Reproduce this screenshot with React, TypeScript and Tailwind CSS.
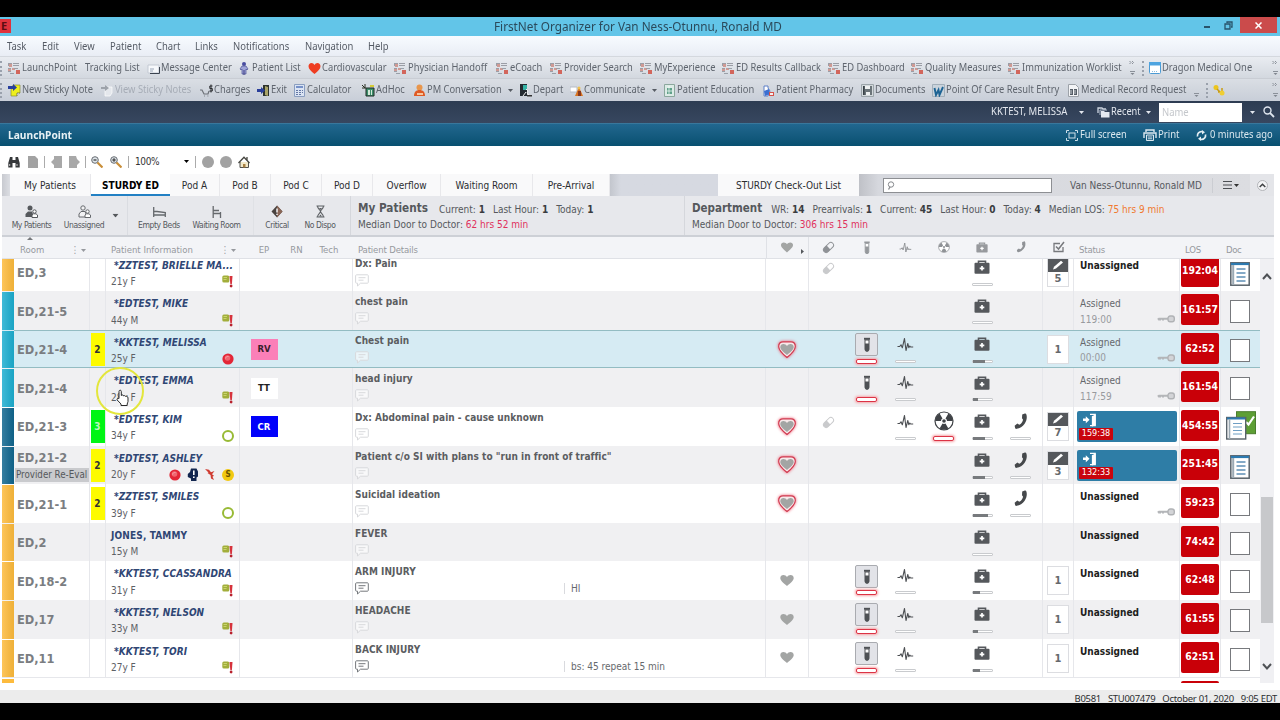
import React from 'react';

const COLS = "grid grid-cols-[12px_76px_16px_134px_48px_17px_48px_413px_43px_38px_39px_38px_39px_38px_42px_31px_106px_41px_39px]";

type Tool = { label: string; w: string; icon?: string; arrow?: boolean; muted?: boolean };

const menus = [
    { label: 'Task', w: 'w-[34.5px]' },
    { label: 'Edit', w: 'w-[32px]' },
    { label: 'View', w: 'w-[36px]' },
    { label: 'Patient', w: 'w-[46px]' },
    { label: 'Chart', w: 'w-[39px]' },
    { label: 'Links', w: 'w-[38px]' },
    { label: 'Notifications', w: 'w-[72px]' },
    { label: 'Navigation', w: 'w-[63px]' },
    { label: 'Help', w: 'w-[40px]' },
];

const toolsTop: Tool[] = [
    { label: 'LaunchPoint', w: 'w-[77px]', icon: 'grid' },
    { label: 'Tracking List', w: 'w-[62px]' },
    { label: 'Message Center', w: 'w-[91px]', icon: 'mail' },
    { label: 'Patient List', w: 'w-[70px]', icon: 'person' },
    { label: 'Cardiovascular', w: 'w-[86px]', icon: 'heart' },
    { label: 'Physician Handoff', w: 'w-[102px]', icon: 'grid' },
    { label: 'eCoach', w: 'w-[54px]', icon: 'grid' },
    { label: 'Provider Search', w: 'w-[90px]', icon: 'grid' },
    { label: 'MyExperience', w: 'w-[82px]', icon: 'grid' },
    { label: 'ED Results Callback', w: 'w-[106px]', icon: 'grid' },
    { label: 'ED Dashboard', w: 'w-[83px]', icon: 'grid' },
    { label: 'Quality Measures', w: 'w-[97px]', icon: 'grid' },
    { label: 'Immunization Worklist', w: 'w-[121px]', icon: 'grid' },
];

const toolsBottom: Tool[] = [
    { label: 'New Sticky Note', w: 'w-[93px]', icon: 'sticky' },
    { label: 'View Sticky Notes', w: 'w-[99px]', icon: 'stickyOff', muted: true },
    { label: 'Charges', w: 'w-[57px]', icon: 'charges' },
    { label: 'Exit', w: 'w-[36px]', icon: 'exit' },
    { label: 'Calculator', w: 'w-[69px]', icon: 'calc' },
    { label: 'AdHoc', w: 'w-[51px]', icon: 'adhoc' },
    { label: 'PM Conversation', w: 'w-[106px]', icon: 'pm', arrow: true },
    { label: 'Depart', w: 'w-[51px]', icon: 'depart' },
    { label: 'Communicate', w: 'w-[93px]', icon: 'comm', arrow: true },
    { label: 'Patient Education', w: 'w-[99px]', icon: 'edu' },
    { label: 'Patient Pharmacy', w: 'w-[99px]', icon: 'pharm' },
    { label: 'Documents', w: 'w-[71px]', icon: 'docs' },
    { label: 'Point Of Care Result Entry', w: 'w-[135px]', icon: 'poc' },
    { label: 'Medical Record Request', w: 'w-[125px]', icon: 'mrr' },
];

const ToolIcon = ({ name }: { name: string }) => {
    const p = { width: 13, height: 13, viewBox: '0 0 13 13', className: 'shrink-0' };
    switch (name) {
        case 'grid':
            return (
                <svg {...p}>
                    <path d="M0 1h4v3H0zM5 1h6v1H5zM5 3h6v1H5zM0 6h3v4H0z" fill="#9b9ea6" />
                    <path d="M1 2h3v3H1zM4 6h3v2H4zM0 7h3v2H0z" fill="#cf9a94" />
                    <path d="M6 6h4v1H6zM2 11h4v1H2z" fill="#9aa0a8" />
                    <path d="M8 8h4v4H8z" fill="#d2665c" />
                </svg>
            );
        case 'mail':
            return (
                <svg {...p}>
                    <path d="M1 3h11v8H1z" fill="#f6f8fb" stroke="#c3c9d3" />
                    <path d="M3 11.500h9.500V5" stroke="#3c4450" fill="none" />
                    <path d="M3 7h4M3 9h3" stroke="#9aa6b8" />
                </svg>
            );
        case 'person':
            return (
                <svg {...p}>
                    <circle cx="6" cy="2" r="2" fill="#484ca0" />
                    <path d="M4 4h4l2 3-1 1-1-1v5H4V7L3 8 2 7z" fill="#9fa4d8" stroke="#4c5196" strokeWidth=".7" />
                    <path d="M6 8v5" stroke="#3c3f80" />
                </svg>
            );
        case 'heart':
            return (
                <svg {...p}>
                    <path d="M6.500 12C3 9 .5 7 .5 4.200C.5 2.400 1.800 1 3.500 1c1.300 0 2.400.8 3 2 .6-1.200 1.700-2 3-2 1.700 0 3 1.400 3 3.200C12.500 7 10 9 6.500 12z" fill="#ee3d22" />
                </svg>
            );
        case 'sticky':
            return (
                <svg {...p}>
                    <path d="M5 1h7v8l-3 3H3V6z" fill="#eef01c" stroke="#8b8c36" strokeWidth=".7" />
                    <path d="M0 2h5V0l4 3.500L5 7V5H0z" fill="#273f9d" />
                    <path d="M9 12V9h3" fill="#fff" stroke="#4a4a4a" strokeWidth=".7" />
                </svg>
            );
        case 'stickyOff':
            return (
                <svg {...p}>
                    <path d="M6 3h5v6l-2 3H4V7z" fill="#e4e7ec" stroke="#fff" strokeWidth=".7" />
                    <path d="M0 3h4V1l4 3-4 3V5H0z" fill="#9da2aa" />
                </svg>
            );
        case 'charges':
            return (
                <svg {...p}>
                    <path d="M0 6h2l2 4h4l1-3M4 12h.8M7.500 12h.8" stroke="#6d7178" fill="none" strokeWidth="1.200" />
                    <path d="M12.500 2H9.800v2.500h2.500V7H9.500M11 .5v8" stroke="#2a2c30" fill="none" />
                </svg>
            );
        case 'exit':
            return (
                <svg {...p}>
                    <path d="M6 1h6v11H6z" fill="#2d322c" />
                    <path d="M8 2l3 1v9l-3-1z" fill="#a9a468" />
                    <path d="M0 5h4V3l4 3.500L4 10V8H0z" fill="#2a3f9b" />
                </svg>
            );
        case 'calc':
            return (
                <svg {...p}>
                    <path d="M1.500.5h10v12h-10z" fill="#dbe4f3" stroke="#8a9ec0" />
                    <path d="M3 2h7v2H3z" fill="#7691c8" />
                    <path d="M3 6h2v1H3zM6 6h2v1H6zM9 6h1v1H9zM3 8h2v1H3zM6 8h2v1H6zM9 8h1v1H9zM3 10h2v1H3zM6 10h2v1H6z" fill="#6478a5" />
                </svg>
            );
        case 'adhoc':
            return (
                <svg {...p}>
                    <path d="M4 4h8v8H4z" fill="#3d8f6c" stroke="#1f2a24" />
                    <path d="M6 6h2v5H6zM9 6h1v5H9z" fill="#d4e8d8" />
                    <path d="M0 1l3 3M3 0v4M0 4h4" stroke="#292f20" />
                    <path d="M8 1h4v2H8z" fill="#d4cb35" />
                </svg>
            );
        case 'pm':
            return (
                <svg {...p}>
                    <circle cx="6.500" cy="3.500" r="3" fill="#e8964c" />
                    <path d="M1 12c0-4 2-6 5.500-6S12 8 12 12z" fill="#e05a24" />
                    <path d="M4 9h6v2H4z" fill="#f8c59c" />
                </svg>
            );
        case 'depart':
            return (
                <svg {...p}>
                    <path d="M1 0h7v12H1z" fill="#232a30" />
                    <path d="M4 1h4v5H4z" fill="#35b3a5" />
                    <path d="M7 5l2 2-1 2 3 3M7 8l-3 4" stroke="#f0f0f0" fill="none" />
                    <path d="M8 11h5v1.500H8z" fill="#333" />
                </svg>
            );
        case 'comm':
            return (
                <svg {...p}>
                    <path d="M0 3h7v5H0z" fill="#fff" stroke="#b7bcc6" />
                    <path d="M9 3l4 9H5z" fill="#d8731f" />
                    <path d="M8 7h3v5H8z" fill="#8b3a1c" />
                    <circle cx="9" cy="4" r="1.500" fill="#efc04c" />
                </svg>
            );
        case 'edu':
            return (
                <svg {...p}>
                    <path d="M1.500.5h10v12h-10z" fill="#dcebe6" stroke="#8ba79d" />
                    <path d="M4 4h5v6H4z" fill="#5fa18a" />
                    <path d="M6 2v8M4 7h5" stroke="#fff" strokeWidth=".7" />
                </svg>
            );
        case 'pharm':
            return (
                <svg {...p}>
                    <path d="M2 2h4v2l2 3-2 5H2z" fill="#fff" stroke="#5d7fc6" />
                    <path d="M2 7l5-2 1 5-5 2z" fill="#3c6fd0" />
                    <path d="M7 8h5v4H7z" fill="#d8524a" />
                    <path d="M8 9h3v2H8z" fill="#f1f1f1" />
                </svg>
            );
        case 'docs':
            return (
                <svg {...p}>
                    <path d="M.5.5h12v12H.5z" fill="#d3d9dc" stroke="#9ca5aa" />
                    <path d="M2 2h9v9H2z" fill="#6b7479" />
                    <path d="M4 2h5v3H4zM5 8h4v3H5z" fill="#eef1f1" />
                    <path d="M2 2h1.500v9H2z" fill="#394147" />
                </svg>
            );
        case 'poc':
            return (
                <svg {...p}>
                    <path d="M.5.5h12v12H.5z" fill="#c9d3dc" stroke="#a3afba" />
                    <path d="M2.500 4l1.500 7 2.500-5 1 5 3.500-8" stroke="#1d6394" fill="none" strokeWidth="1.900" />
                </svg>
            );
        default:
            return (
                <svg {...p}>
                    <path d="M1.500.5h7l3 3v9h-10z" fill="#f3f4f6" stroke="#9da2a9" />
                    <path d="M3 5h3v6H3zM7 5h3v6H7z" fill="#565d66" />
                    <path d="M4 6v4M8 6v4" stroke="#e9edf0" strokeWidth=".8" />
                </svg>
            );
    }
};

const Grip = ({ className = '' }: { className?: string }) => (
    <div className={`h-[15px] w-0.5 shrink-0 border-l-2 border-dotted border-[#9aa1ac] ${className}`} />
);

const More = ({ className = '', low }: { className?: string; low?: boolean }) => (
    <svg width="6" height="16" viewBox="0 0 6 16" className={`shrink-0 ${className}`}>
        {!low && <path d="M.5 1l1.500 1.500L.5 4M3 1l1.500 1.500L3 4" stroke="#8a9099" fill="none" />}
        <path d="M1 11.500h5" stroke="#8a9099" />
        <path d="M1.500 13h4l-2 2z" fill="#80868f" />
    </svg>
);

const Caret = ({ className = '' }: { className?: string }) => (
    <svg width="5" height="3" viewBox="0 0 5 3" className={`shrink-0 ${className}`}><path d="M0 0h5L2.500 3z" fill="currentColor" /></svg>
);

const ToolItem = ({ tool }: { tool: Tool }) => (
    <div className={`flex shrink-0 items-center whitespace-nowrap ${tool.w} ${tool.muted ? 'text-[#a6acb6]' : 'text-[#5f656e]'}`}>
        {tool.icon && <div className="mr-px"><ToolIcon name={tool.icon} /></div>}
        <span className="flex-1 w-0 origin-left scale-x-[0.89]">{tool.label}</span>
        {tool.arrow && <Caret className="mr-[6px] text-[#565b63]" />}
    </div>
);

const tabs = [
    { label: 'My Patients', w: 'w-[81px]' },
    { label: 'STURDY ED', w: 'w-[79px]' },
    { label: 'Pod A', w: 'w-[50px]' },
    { label: 'Pod B', w: 'w-[51px]' },
    { label: 'Pod C', w: 'w-[51px]' },
    { label: 'Pod D', w: 'w-[51px]' },
    { label: 'Overflow', w: 'w-[68px]' },
    { label: 'Waiting Room', w: 'w-[92px]' },
    { label: 'Pre-Arrival', w: 'w-[77px]' },
];

type Row = {
    strip: string;
    room: string;
    sub?: string;
    acuity?: number;
    name: string;
    age: string;
    flag: 'alert' | 'red' | 'ring' | 'many';
    ep?: string;
    epClass?: string;
    details: string;
    note?: string;
    comment?: boolean;
    heart?: 'glow' | 'plain';
    pill?: boolean;
    tube?: 'button' | 'plain';
    ekg?: boolean;
    rad?: boolean;
    kit: string;
    phone?: boolean;
    task?: number;
    pen?: boolean;
    status: string;
    time?: string;
    key?: boolean;
    los: string;
    doc?: 'note' | 'done';
};

const ORANGE = 'bg-[#fdbb3d]';
const CYAN = 'bg-[#1eaed0]';
const TEAL = 'bg-[#12678f]';

const rows: Row[] = [
    { strip: ORANGE, room: 'ED,3', name: '*ZZTEST, BRIELLE MA...', age: '21y F', flag: 'alert', details: 'Dx: Pain', pill: true, kit: 'w-0', task: 5, pen: true, status: 'Unassigned', los: '192:04', doc: 'note' },
    { strip: CYAN, room: 'ED,21-5', name: '*EDTEST, MIKE', age: '44y M', flag: 'alert', details: 'chest pain', kit: 'w-0', status: 'Assigned', time: '119:00', key: true, los: '161:57' },
    { strip: CYAN, room: 'ED,21-4', acuity: 2, name: '*KKTEST, MELISSA', age: '25y F', flag: 'red', ep: 'RV', epClass: 'bg-[#fb7fb8] text-[#38202c]', details: 'Chest pain', heart: 'glow', tube: 'button', ekg: true, kit: 'w-[12px]', task: 1, status: 'Assigned', time: '00:00', key: true, los: '62:52' },
    { strip: CYAN, room: 'ED,21-4', name: '*EDTEST, EMMA', age: '28y F', flag: 'alert', ep: 'TT', epClass: 'bg-white text-[#222]', details: 'head injury', tube: 'plain', ekg: true, kit: 'w-[5px]', status: 'Assigned', time: '117:59', key: true, los: '161:54' },
    { strip: TEAL, room: 'ED,21-3', acuity: 3, name: '*EDTEST, KIM', age: '34y F', flag: 'ring', ep: 'CR', epClass: 'bg-[#0000fb] text-white', details: 'Dx: Abdominal pain - cause unknown', heart: 'glow', pill: true, ekg: true, rad: true, kit: 'w-[12px]', phone: true, task: 7, pen: true, status: 'Blue', time: '159:38', los: '454:55', doc: 'done' },
    { strip: TEAL, room: 'ED,21-2', sub: 'Provider Re-Eval', acuity: 2, name: '*EDTEST, ASHLEY', age: '20y F', flag: 'many', details: 'Patient c/o SI with plans to "run in front of traffic"', heart: 'glow', kit: 'w-[12px]', phone: true, task: 3, pen: true, status: 'Blue', time: '132:33', los: '251:45', doc: 'note' },
    { strip: ORANGE, room: 'ED,21-1', acuity: 2, name: '*ZZTEST, SMILES', age: '39y F', flag: 'ring', details: 'Suicidal ideation', heart: 'glow', kit: 'w-[15px]', phone: true, status: 'Unassigned', key: true, los: '59:23' },
    { strip: ORANGE, room: 'ED,2', name: 'JONES, TAMMY', age: '15y M', flag: 'alert', details: 'FEVER', kit: 'w-0', status: 'Unassigned', los: '74:42' },
    { strip: ORANGE, room: 'ED,18-2', name: '*KKTEST, CCASSANDRA', age: '31y F', flag: 'alert', details: 'ARM INJURY', comment: true, note: 'HI', heart: 'plain', tube: 'button', ekg: true, kit: 'w-[7px]', task: 1, status: 'Unassigned', los: '62:48' },
    { strip: ORANGE, room: 'ED,17', name: '*KKTEST, NELSON', age: '33y M', flag: 'alert', details: 'HEADACHE', heart: 'plain', tube: 'button', ekg: true, kit: 'w-[5px]', task: 1, status: 'Unassigned', los: '61:55' },
    { strip: ORANGE, room: 'ED,11', name: '*KKTEST, TORI', age: '27y F', flag: 'alert', details: 'BACK INJURY', comment: true, note: 'bs: 45 repeat 15 min', heart: 'plain', tube: 'button', ekg: true, kit: 'w-[7px]', task: 1, status: 'Unassigned', los: '62:51' },
];

const HeartIcon = ({ glow }: { glow?: boolean }) => (
    <svg width="26" height="24" viewBox="0 0 26 24" className={glow ? 'drop-shadow-[0_0_1.5px_#f0566a]' : ''}>
        {glow && <path d="M13 20.500C8.500 17 5 13.500 4.700 9.800C4.500 6.300 6.500 4.800 9 4.800h8c2.500 0 4.500 1.500 4.300 5C21 13.500 17.500 17 13 20.500z" fill="#f7e9ea" stroke="#cf3a50" strokeWidth="1.200" />}
        <path d="M13 18C9 14.500 6.300 12.400 6.300 9.900C6.300 8.100 7.700 6.900 9.400 6.900c1.500 0 2.900.8 3.600 2 .7-1.200 2.100-2 3.600-2 1.700 0 3.100 1.200 3.100 3C19.700 12.400 17 14.500 13 18z" fill="#a3a5a4" />
    </svg>
);

const PillIcon = ({ color }: { color: string }) => (
    <svg width="13" height="13" viewBox="0 0 13 13">
        <g transform="rotate(-45 6.500 6.500)">
            <rect x="0.500" y="3.800" width="12" height="5.400" rx="2.700" fill="none" stroke={color} />
            <path d="M6.500 3.800H3.200a2.700 2.700 0 0 0 0 5.400h3.300z" fill={color} />
        </g>
    </svg>
);

const TubeIcon = ({ color }: { color: string }) => (
    <svg width="8" height="15" viewBox="0 0 8 15">
        <path d="M1 .8h6v2H1z" fill={color} />
        <path d="M2 3h4v9.300a2 2 0 0 1-4 0z" fill="#fff" stroke={color} />
        <path d="M2 6.500h4v6a2 2 0 0 1-4 0z" fill={color} />
    </svg>
);

const EkgIcon = ({ color }: { color: string }) => (
    <svg width="17" height="15" viewBox="0 0 17 15">
        <path d="M.5 9.500h2.200l1.300-1.700 1.300 3L7.500 1.500 9 13.500l1.800-7 1 4.200 1-1.700.8 1h2.600" fill="none" stroke={color} strokeWidth="1.100" strokeLinejoin="round" />
    </svg>
);

const RadIcon = ({ color, size }: { color: string; size: number }) => (
    <svg width={size} height={size} viewBox="0 0 20 20">
        <circle cx="10" cy="10" r="9" fill="#fff" stroke={color} strokeWidth="1.200" />
        <circle cx="10" cy="10" r="1.800" fill={color} />
        <path d="M7 10H1.200A8.800 8.800 0 0 1 5.600 2.400L8.500 7.400A3 3 0 0 0 7 10z" fill={color} />
        <path d="M13 10h5.800a8.800 8.800 0 0 0-4.400-7.600l-2.900 5A3 3 0 0 1 13 10z" fill={color} />
        <path d="M8.500 12.600L5.600 17.600a8.800 8.800 0 0 0 8.800 0l-2.900-5a3 3 0 0 1-3 0z" fill={color} />
    </svg>
);

const KitIcon = ({ color, w, h }: { color: string; w: number; h: number }) => (
    <svg width={w} height={h} viewBox="0 0 16 14">
        <path d="M4.500 3V1.200h7V3" fill="none" stroke={color} strokeWidth="1.600" />
        <rect x="0.500" y="2.800" width="15" height="11" rx="1" fill={color} />
        <path d="M8 6v4.600M5.700 8.300h4.600" stroke="#fff" strokeWidth="1.700" />
    </svg>
);

const PhoneIcon = ({ color, size }: { color: string; size: number }) => (
    <svg width={size} height={size} viewBox="0 0 16 18">
        <path d="M9.800 1.500l2.800-.9c.9-.2 1.400.3 1.700 1.200.8 3 .3 6.400-1.900 9.500-2.200 3-5.200 5-8.400 5.500-.9.100-1.500-.2-1.700-1l-.5-2.200 2.900-2.400 2 1.300c2-1.200 3.600-3 4-5.400L9.600 5.600z" fill={color} />
    </svg>
);

const KeyIcon = () => (
    <svg width="18" height="8" viewBox="0 0 18 8">
        <path d="M11 3.800H2L.8 4.600M3 4.500v1M6 4.500v1" stroke="#b4b6b9" strokeWidth="2" fill="none" />
        <rect x="11" y="1" width="6.300" height="5.800" rx="2.200" fill="#d3d4d7" stroke="#b0b2b5" strokeWidth="1.400" />
    </svg>
);

const Bubble = ({ on }: { on?: boolean }) => (
    <svg width="14" height="13" viewBox="0 0 14 13" className={on ? 'text-[#74787c]' : 'text-[#d8d9dc]'}>
        <path d="M1.500 .8h11a1 1 0 0 1 .8 1v6.400a1 1 0 0 1-.8 1H5.500L2.500 12V9.200h-1a1 1 0 0 1-.9-1V1.800a1 1 0 0 1 .9-1z" fill="#fff" fillOpacity=".5" stroke="currentColor" />
        <path d="M3.500 3.700h7M3.500 6.200h5" stroke="currentColor" />
    </svg>
);

const AlertFlag = () => (
    <svg width="12" height="13" viewBox="0 0 12 13">
        <rect x="0.300" y="0.500" width="7" height="7" rx="1.500" fill="#a2ae3b" />
        <path d="M1.500 2.500h3.500M1.500 4.500h3" stroke="#c9d46e" />
        <path d="M7.500 1h3l-.6 8H8.300z" fill="#d6323c" />
        <circle cx="9.100" cy="11" r="1.400" fill="#b8222e" />
    </svg>
);

const RedFlag = () => (
    <svg width="12" height="12" viewBox="0 0 12 12">
        <circle cx="6" cy="6" r="5.600" fill="#e32636" />
        <circle cx="5.500" cy="5" r="2.800" fill="#f06670" />
        <path d="M3.500 5.500c.3-1.500 1.500-2.300 3-2" stroke="#f8a5aa" fill="none" />
    </svg>
);

const Flag = ({ kind }: { kind: Row['flag'] }) => {
    if (kind === 'alert') return <AlertFlag />;
    if (kind === 'red') return <RedFlag />;
    if (kind === 'ring') return <div className="size-[12px] rounded-full border-2 border-[#98ba35]" />;
    return (
        <div className="flex items-center gap-[6px]">
            <RedFlag />
            <svg width="12" height="13" viewBox="0 0 12 13">
                <path d="M4 .5h5.500l1.500 3v5l-1.500 1V13H4v-2.500L.8 9V6L3 4z" fill="#12264f" />
                <path d="M6.800 2.500v4.500M6.800 8.500V10" stroke="#fff" strokeWidth="1.600" />
            </svg>
            <svg width="11" height="13" viewBox="0 0 11 13">
                <path d="M0 1l4 .8 2 2.500L9.500 3 7 6.300l2 1.500-1.500 1L9 12l-3-1.500L5.500 7 2.500 5l1-.5z" fill="#cf3b31" />
            </svg>
            <div className="flex size-3 items-center justify-center rounded-full bg-[#f2c811] text-[8px] font-bold leading-none text-[#6b5200]">S</div>
        </div>
    );
};

const Bar = ({ hot, fill = 'w-0' }: { hot?: boolean; fill?: string }) =>
    hot ? (
        <div className="h-[5px] w-[21px] rounded-[2px] border border-[#dc3345] bg-white shadow-[0_0_2.5px_1px_#f6a4a8]" />
    ) : (
        <div className="h-[3px] w-[21px] rounded-[1px] border border-[#c9cbce] bg-white">
            <div className={`-mt-px h-[3px] bg-[#777a7d] ${fill}`} />
        </div>
    );

// icon on top with its progress bar underneath
const Order = ({ children, hot, fill }: { children: React.ReactNode; hot?: boolean; fill?: string }) => (
    <div className="flex flex-col items-center">
        <div className="flex h-[29px] items-center justify-center">{children}</div>
        <div className={hot ? '' : 'pt-px'}><Bar hot={hot} fill={fill} /></div>
    </div>
);

const DocIcon = ({ done }: { done?: boolean }) => {
    if (done) {
        return (
            <svg width="30" height="29" viewBox="0 0 30 29">
                <rect x="10.500" y="0.700" width="19" height="22" fill="#5e9f35" stroke="#4b7d2e" />
                <path d="M20 11l2.500 2.500L28 5.500" stroke="#fff" strokeWidth="2.200" fill="none" />
                <rect x="0.700" y="6.500" width="19" height="21.500" fill="#fff" stroke="#59636b" strokeWidth="1.400" />
                <path d="M1 7.500h18" stroke="#2d7ab0" strokeWidth="2" />
                <path d="M3.500 8v20" stroke="#9ba9b3" strokeWidth="1.600" />
                <path d="M7 12.500h9M7 16h9M7 19.500h9M7 23h9" stroke="#6f9fc4" strokeWidth="1.200" />
            </svg>
        );
    }
    return (
        <svg width="20" height="24" viewBox="0 0 20 24">
            <rect x="0.800" y="0.800" width="18.400" height="22.400" fill="#fff" stroke="#59636b" strokeWidth="1.500" />
            <path d="M1 2h18" stroke="#2d7ab0" strokeWidth="2.200" />
            <path d="M3.200 3v20" stroke="#9ba9b3" strokeWidth="2" />
            <path d="M6.500 7h9M6.500 11h9M6.500 15h9M6.500 19h9" stroke="#5d8fb5" strokeWidth="1.300" />
        </svg>
    );
};

const PatientRow = ({ row, index }: { row: Row; index: number }) => {
    const selected = index === 2;
    const bg = selected ? 'bg-[#d6ebf3]' : index % 2 ? 'bg-[#f0f0f2]' : 'bg-white';
    const line = selected ? 'border-r border-transparent' : 'border-r border-[#e6e7eb]';
    const italic = row.name.startsWith('*');
    return (
        <div className={`${COLS} relative h-[38.6px] ${bg}`}>
            {selected && <div className="absolute inset-y-0 right-0 left-3 border-y border-[#93bcc2]" />}
            <div className={`mt-px ${row.strip} bg-gradient-to-r from-white/15 to-black/5`} />
            <div className={`relative pl-[3px] ${line}`}>
                <div className={`text-[12.7px] leading-[16px] font-bold text-[#7a7d81] ${row.sub ? 'pt-[4px]' : 'pt-[12.5px]'}`}>{row.room}</div>
                {row.sub && <div className="-ml-[2px] mt-[2px] h-[14px] overflow-hidden bg-[#c9cacd] pl-px text-[9.7px] leading-[14px] whitespace-nowrap text-[#55585c]">{row.sub}</div>}
            </div>
            <div className={`relative flex justify-center ${line}`}>
                {row.acuity && (
                    <div className={`mt-[3px] flex h-[33px] w-[14px] items-center justify-center text-[10px] font-bold ${row.acuity === 3 ? 'bg-[#00f514] text-[#b9f5bd]' : 'bg-[#fdfb00] text-[#333]'}`}>{row.acuity}</div>
                )}
            </div>
            <div className={`relative pl-[5px] whitespace-nowrap ${line}`}>
                <div className={`pt-[6px] text-[10px] leading-[13px] font-bold text-[#2f4674] ${italic ? 'pl-[3px] tracking-[0.04px] italic' : 'tracking-[0.15px]'}`}>{row.name}</div>
                <div className="mt-[3px] flex h-[14px] items-center justify-between pr-[5px] text-[10px] text-[#5d6065]">
                    {row.age}
                    <Flag kind={row.flag} />
                </div>
            </div>
            <div className="relative flex items-center justify-center pt-px">
                {row.ep && <div className={`flex h-[21px] w-[27px] items-center justify-center text-[9.5px] font-bold ${row.epClass}`}>{row.ep}</div>}
            </div>
            <div />
            <div className={line} />
            <div className={`relative pl-[2px] whitespace-nowrap ${line}`}>
                <div className="pt-[4px] text-[10px] leading-[13px] font-bold tracking-[0.03px] text-[#5b5d61]">{row.details}</div>
                <div className="mt-[4px] flex h-[13px] items-center">
                    <Bubble on={row.comment} />
                    {row.note && <div className="ml-[195px] border-l border-[#d9dade] pl-[6px] text-[10px] leading-[11px] text-[#66696d]">{row.note}</div>}
                </div>
            </div>
            <div className={`relative flex items-center justify-center ${line}`}>{row.heart && <div className="pr-px pb-px"><HeartIcon glow={row.heart === 'glow'} /></div>}</div>
            <div className="relative flex justify-center pt-[9px]">{row.pill && <PillIcon color="#c9cacc" />}</div>
            <div className="relative">
                {row.tube && (
                    <Order hot>
                        {row.tube === 'button' ? (
                            <div className="mt-[1px] flex h-[23px] w-[23px] items-center justify-center rounded-[2px] border border-[#a9abb0] bg-[#e2e3e8]"><TubeIcon color="#4e5155" /></div>
                        ) : (
                            <TubeIcon color="#4e5155" />
                        )}
                    </Order>
                )}
            </div>
            <div className="relative">{row.ekg && <Order><EkgIcon color="#4c4f53" /></Order>}</div>
            <div className="relative">{row.rad && <Order hot><RadIcon color="#3f4246" size={20} /></Order>}</div>
            <div className="relative"><Order fill={row.kit}><KitIcon color="#55585c" w={16} h={14} /></Order></div>
            <div className={`relative pr-[2px] ${line}`}>{row.phone && <Order><PhoneIcon color="#45484b" size={17} /></Order>}</div>
            <div className={`relative flex justify-center pt-[5px] ${line}`}>
                {row.task && (
                    <div className="flex h-[29px] w-[22px] flex-col border border-[#dcdde1] bg-white text-[#66696d]">
                        {row.pen && (
                            <div className="flex h-[13px] shrink-0 items-center justify-center bg-[#55585c]">
                                <svg width="12" height="10" viewBox="0 0 12 10"><path d="M1 9.500l1-2.800L9 .8 11 2.500 4 8.500z" fill="#fff" /></svg>
                            </div>
                        )}
                        <div className="flex flex-1 items-center justify-center text-[11px] leading-none font-bold">{row.task}</div>
                    </div>
                )}
            </div>
            <div className={`relative ${line}`}>
                {row.status === 'Blue' ? (
                    <div className="mt-[4px] ml-[3px] h-[31px] w-[100px] rounded-[2px] bg-[#2e7da6] pt-[2px] pl-[2px]">
                        <svg width="14" height="14" viewBox="0 0 15 15" className="ml-1">
                            <path d="M0 6h3V3.500L7 7.200 3 11V8.500H0z" fill="#fff" />
                            <path d="M7.500 1.500H13v12H7.500" fill="none" stroke="#fff" strokeWidth="1.500" />
                            <path d="M9.500 3.500l4-2v12l-4 1z" fill="#fff" />
                        </svg>
                        <div className="mt-px flex h-[12px] w-[34px] items-center justify-center rounded-[1px] bg-[#c9050d] text-[9px] text-white">{row.time}</div>
                    </div>
                ) : (
                    <div className="pl-[6px] whitespace-nowrap">
                        <div className={`pt-[6px] text-[10px] leading-[13px] ${row.status === 'Unassigned' ? 'font-bold text-[#1d1e20]' : 'text-[#65686c]'}`}>{row.status}</div>
                        <div className="mt-[2px] flex h-[14px] items-center justify-between pr-[4px] text-[10px] text-[#989a9e]">
                            <span>{row.time}</span>
                            {row.key && <KeyIcon />}
                        </div>
                    </div>
                )}
            </div>
            <div className={`relative pt-[3px] pl-px ${line}`}>
                <div className="flex h-[31px] w-[38px] items-center justify-center rounded-[2px] bg-[#c90008] text-[10.3px] font-bold text-white">{row.los}</div>
            </div>
            <div className="relative flex justify-center pt-[9px] pr-px">
                {row.doc === 'done' ? <div className="-mt-[5px] ml-px"><DocIcon done /></div> : row.doc ? <DocIcon /> : <div className="h-[23px] w-[20px] border-[1.5px] border-[#77797d] bg-white" />}
            </div>
        </div>
    );
};

const Stat = ({ label, value }: { label: string; value: string }) => (
    <span>{label}: <b className="text-[#3a3c40]">{value}</b></span>
);

const App: React.FC = () => {
    return (
        <div className="relative flex h-[720px] w-[1280px] flex-col overflow-hidden bg-white pt-[17px] font-['Noto_Sans',sans-serif]">
            <div className="absolute inset-x-0 top-0 h-[17px] bg-black" />

            <div className="relative flex h-[19px] shrink-0 items-center justify-center bg-[#62c5e8] text-[12px] text-[#2b4a5b]">
                <div className="absolute top-[2px] left-0 flex h-[14px] w-[11px] items-center bg-[#e0323c] pl-[1px] text-[11px] font-bold text-[#5c0c12]">E</div>
                <span className="scale-x-[0.98] pr-[5px]">FirstNet Organizer for Van Ness-Otunnu, Ronald MD</span>
                <div className="absolute top-0 right-[3px] flex h-[16px] items-center">
                    <div className="mt-[4px] h-[2px] w-[6px] bg-[#28536a]" />
                    <svg width="9" height="9" viewBox="0 0 9 9" className="ml-[14px]"><path d="M1 3h5v5H1zM3 2V1h5v5H7" fill="none" stroke="#28536a" strokeWidth="1.300" /></svg>
                    <div className="ml-[7px] flex h-[16px] w-[37px] items-center justify-center bg-[#cb4b4b]">
                        <svg width="7" height="7" viewBox="0 0 7 7"><path d="M.5.5l6 6M6.500.5l-6 6" stroke="#fff" strokeWidth="1.500" /></svg>
                    </div>
                </div>
            </div>

            <div className="flex h-[21px] shrink-0 items-center border-b border-[#d4d8de] bg-gradient-to-b from-[#f7fbff] to-[#e9edf5] pt-[2px] text-[10.5px] text-[#555b65]">
                {menus.map(m => (
                    <span key={m.label} className={`pl-[7px] ${m.w}`}><span className="inline-block origin-left scale-x-[0.9]">{m.label}</span></span>
                ))}
            </div>

            <div className="flex h-[22px] shrink-0 items-center border-b border-[#c9cdd4] bg-gradient-to-b from-[#e9ecf1] to-[#d3d8df] pt-px text-[10.5px]">
                <Grip className="mr-[6px]" />
                {toolsTop.map(t => <ToolItem key={t.label} tool={t} />)}
                <More />
                <Grip className="mr-[5px] ml-[7px]" />
                <svg width="12" height="12" viewBox="0 0 12 12" className="shrink-0">
                    <rect x="0.500" y="0.500" width="11" height="11" rx="1" fill="#fff" stroke="#4c9bd4" />
                    <path d="M0 0h12v3.500H0z" fill="#4ea4e0" />
                    <path d="M3 9.500h6" stroke="#8cbde0" strokeDasharray="1" />
                </svg>
                <span className="ml-[1px] w-[110px] origin-left scale-x-[0.89] whitespace-nowrap text-[#5f656e]">Dragon Medical One</span>
                <More />
            </div>

            <div className="flex h-[22px] shrink-0 items-center bg-gradient-to-b from-[#dadee4] to-[#c8ced8] text-[10.5px]">
                <Grip className="mr-[6px]" />
                {toolsBottom.map(t => <ToolItem key={t.label} tool={t} />)}
                <More className="ml-px" low />
                <Grip className="mr-[5px] ml-[7px]" />
                <svg width="12" height="12" viewBox="0 0 12 12" className="shrink-0">
                    <circle cx="3" cy="3.500" r="2.500" fill="#ecc51f" /><path d="M4 5l3 3M9 4v4H5" stroke="#c99c15" strokeWidth="1.500" fill="none" />
                    <circle cx="9" cy="9" r="2.500" fill="#f0ce33" />
                </svg>
                <More className="ml-[47px]" />
            </div>

            <div className="flex h-[22px] shrink-0 items-center bg-gradient-to-b from-[#2d3c52] to-[#37475f] text-[10.5px] text-[#e3e7ee]">
                <span className="ml-[991px] w-[88px] origin-left scale-x-[0.91] whitespace-nowrap">KKTEST, MELISSA</span>
                <Caret />
                <svg width="13" height="12" viewBox="0 0 13 12" className="ml-[13px] shrink-0">
                    <path d="M1 7V2h4l1 1h3" fill="none" stroke="#cdd5e0" strokeWidth="1.300" />
                    <path d="M4 5h3l1 1h4.500v5.500H4z" fill="#e3e9f1" />
                    <path d="M3 9V4h7" fill="none" stroke="#aebacb" />
                </svg>
                <span className="ml-px w-[35px] shrink-0 origin-left scale-x-[0.88]">Recent</span>
                <Caret />
                <div className="mt-px ml-[8px] flex h-[19px] w-[83px] shrink-0 items-center bg-white pl-[3px] text-[#c4c7cb]"><span className="origin-left scale-x-[0.9]">Name</span></div>
                <Caret className="ml-[8px]" />
                <svg width="12" height="12" viewBox="0 0 12 12" className="ml-[8px]"><circle cx="4.500" cy="4.500" r="3.500" fill="none" stroke="#dfe5ee" strokeWidth="1.400" /><path d="M7 7l4 4" stroke="#dfe5ee" strokeWidth="1.800" /></svg>
            </div>

            <div className="flex h-[23px] shrink-0 items-center border-t border-[#39779b] bg-gradient-to-b from-[#21678f] to-[#075070] text-[10.5px] whitespace-nowrap text-[#dbe8ef]">
                <span className="w-[1069px] pl-2"><span className="inline-block origin-left scale-x-[0.93] text-[11px] font-bold text-[#e8f1f5]">LaunchPoint</span></span>
                <svg width="12" height="11" viewBox="0 0 12 11" className="shrink-0"><path d="M.5 3V.5H3M9 .5h2.500V3M11.500 8v2.500H9M3 10.500H.5V8" fill="none" stroke="#cfe0ea" /><rect x="3" y="3" width="6" height="5" fill="none" stroke="#cfe0ea" /></svg>
                <span className="ml-[2px] w-[63px] shrink-0 origin-left scale-x-[0.89]">Full screen</span>
                <svg width="14" height="12" viewBox="0 0 14 12" className="shrink-0"><path d="M3 3V1h8v2M1 9V4h12v5" fill="none" stroke="#dce8f0" strokeWidth="1.400" /><path d="M3.500 6h7v5.500h-7z" fill="#2c6989" stroke="#dce8f0" /><path d="M5 8h4M5 9.700h4" stroke="#dce8f0" strokeWidth=".8" /></svg>
                <span className="ml-[1px] w-[38px] shrink-0 origin-left scale-x-[0.91]">Print</span>
                <svg width="11" height="11" viewBox="0 0 11 11" className="shrink-0"><path d="M1.500 6.500A4 4 0 0 1 6 1.700M9.500 4.500A4 4 0 0 1 5 9.300" fill="none" stroke="#e3edf3" strokeWidth="1.700" /><path d="M6 0l3 2.200L6 4.500zM5 6.500L2 8.800 5 11z" fill="#e3edf3" /></svg>
                <span className="ml-[3px] origin-left scale-x-[0.89]">0 minutes ago</span>
            </div>

            <div className="relative flex min-h-0 flex-1 flex-col font-['DejaVu_Sans_Condensed','DejaVu_Sans',sans-serif] [font-stretch:condensed]">
                <div className="flex h-[28px] shrink-0 items-center pt-[3px] pl-[8px]">
                    <svg width="12" height="12" viewBox="0 0 12 12"><path d="M2 1h2.500v3h3V1H10l1.700 6v4.500H7.500V7h-3v4.500H.3V7z" fill="#36383b" /><path d="M1.700 8v2M9 8v2" stroke="#c6c6c6" /></svg>
                    <svg width="10" height="12" viewBox="0 0 10 12" className="ml-[8px]"><path d="M0 0h7l3 3v9H0z" fill="#a2a2a2" /></svg>
                    <div className="mx-[6px] h-[12px] w-px bg-[#ababab]" />
                    <svg width="11" height="12" viewBox="0 0 11 12"><path d="M3 0h8v12H3V9L0 6l3-3z" fill="#a8a8a8" /></svg>
                    <svg width="11" height="12" viewBox="0 0 11 12" className="ml-[7px]"><path d="M0 0h7l1 3 3 3-3 3v3H0z" fill="#a8a8a8" /></svg>
                    <div className="mx-[5px] h-[12px] w-px bg-[#ababab]" />
                    <svg width="12" height="12" viewBox="0 0 12 12"><circle cx="4" cy="4" r="3.300" fill="#dfe5ea" stroke="#676c72" /><path d="M2.500 4h3" stroke="#333" strokeWidth="1.200" /><path d="M6.500 6.500l5 5" stroke="#c98e38" strokeWidth="2.200" /></svg>
                    <svg width="12" height="12" viewBox="0 0 12 12" className="ml-[7px]"><circle cx="4" cy="4" r="3.300" fill="#dfe5ea" stroke="#676c72" /><path d="M2.200 4h3.600M4 2.200v3.600" stroke="#333" strokeWidth="1.200" /><path d="M6.500 6.500l5 5" stroke="#c98e38" strokeWidth="2.200" /></svg>
                    <span className="ml-[6px] w-[56px] border-l border-[#ababab] pl-[6px] text-[10px] leading-[12px] tracking-[-0.4px] text-[#333]">100%</span>
                    <Caret className="text-black" />
                    <div className="mx-[6px] h-[12px] w-px bg-[#ababab]" />
                    <div className="size-[12px] rounded-full bg-[#a2a2a2]" />
                    <div className="ml-[6px] size-[12px] rounded-full bg-[#a2a2a2]" />
                    <svg width="12" height="12" viewBox="0 0 12 12" className="ml-[6px]"><path d="M2 6v5.500h8.500V6" fill="#f3e9c8" stroke="#50504c" /><path d="M.5 7L6 1.200 11.500 7M9 1v3" fill="none" stroke="#45453f" strokeWidth="1.300" /><path d="M5 8h2.500v3.500H5z" fill="#a87f42" /></svg>
                </div>

                <div className="ml-[2px] flex h-[22px] w-[1272px] shrink-0 items-stretch bg-[#e4e5e9] text-[10px] text-[#2b2d30]">
                    <div className="w-[8px] bg-gradient-to-r from-[#c8cad0] to-[#dcdee3]" />
                    {tabs.map(t => (
                        <div key={t.label} className={`flex shrink-0 items-center justify-center whitespace-nowrap ${t.w} ${t.label === 'STURDY ED' ? 'border-b-2 border-[#2381c4] bg-white pt-0.5 font-bold text-black' : 'border-r border-[#e8e8eb] bg-[#f9f9fa]'}`}>{t.label}</div>
                    ))}
                    <div className="w-[108px] bg-gradient-to-r from-[#c3c6cd] via-[#d6d9e1] via-10% to-[#d6d9e1]" />
                    <div className="flex w-[141px] items-center justify-center bg-[#f9f9fa]">STURDY Check-Out List</div>
                    <div className="flex w-[391px] items-center bg-gradient-to-r from-[#bfc1c7] via-[#d6d8de] via-5% to-[#dcdde1] text-[#55585d]">
                        <div className="ml-[24px] flex h-[15px] w-[169px] items-center border border-[#8d8f93] bg-white pl-[3px]">
                            <svg width="8" height="9" viewBox="0 0 8 9"><circle cx="4" cy="3.500" r="2.700" fill="none" stroke="#85888c" /><path d="M3 6L1.500 8.500" stroke="#85888c" strokeWidth="1.300" /></svg>
                        </div>
                        <span className="ml-[18px] w-[143px] border-r border-[#cbcdd2] whitespace-nowrap">Van Ness-Otunnu, Ronald MD</span>
                        <svg width="16" height="10" viewBox="0 0 16 10" className="ml-[10px]"><path d="M0 1.500h9M0 5h9M0 8.500h9" stroke="#4c4f53" strokeWidth="1.200" /><path d="M11 4h5l-2.500 3z" fill="#333" /></svg>
                    </div>
                    <div className="flex flex-1 items-center justify-center">
                        <div className="flex size-[11px] items-center justify-center rounded-full border border-[#b3b5b9] bg-[#f4f4f6]">
                            <svg width="7" height="5" viewBox="0 0 7 5"><path d="M.7 4L3.500 1.200 6.300 4" fill="none" stroke="#3e4043" strokeWidth="1.500" /></svg>
                        </div>
                    </div>
                </div>

                <div className="ml-[2px] flex h-[41px] w-[1272px] shrink-0 border-b-2 border-[#cdd0d6] bg-[#e7e8ec] text-[8.5px] text-[#55585c]">
                    <div className="flex w-[59px] flex-col items-center pt-[9px]">
                        <svg width="13" height="13" viewBox="0 0 13 13"><circle cx="5" cy="3" r="2.500" fill="#55585c" /><path d="M.5 12V9l2.500-2.500h4L8 9v3z" fill="#55585c" /><circle cx="9.500" cy="6.500" r="1.700" fill="#fff" stroke="#55585c" /><path d="M7 12.500V10l1.500-1.200h2.500l1.500 1.200v2.500z" fill="#fff" stroke="#55585c" /></svg>
                        <span className="mt-[1px] tracking-[-0.4px]">My Patients</span>
                    </div>
                    <div className="flex w-[46px] flex-col items-center pt-[9px]">
                        <svg width="13" height="13" viewBox="0 0 13 13"><circle cx="5" cy="3" r="2.200" fill="#f2f2f4" stroke="#66696d" /><path d="M1 12V9l2-2.500h4L8 9v3z" fill="#f2f2f4" stroke="#66696d" /><circle cx="9.500" cy="6.500" r="1.700" fill="#fff" stroke="#66696d" /><path d="M7 12.500V10l1.500-1.200h2.500l1.500 1.200v2.500z" fill="#fff" stroke="#66696d" /></svg>
                        <span className="mt-[1px] tracking-[-0.4px]">Unassigned</span>
                    </div>
                    <div className="w-[21px] border-r border-[#dadce1] pt-[18px]"><Caret className="ml-[6px] scale-125" /></div>
                    <div className="flex w-[62px] flex-col items-center pt-[10px]">
                        <svg width="13" height="12" viewBox="0 0 13 12"><path d="M.7 1v10M.7 9h11.600M12.300 11V6.500L4 5.500H1" fill="none" stroke="#66696d" strokeWidth="1.300" /></svg>
                        <span className="mt-[1px] tracking-[-0.4px] whitespace-nowrap">Empty Beds</span>
                    </div>
                    <div className="flex w-[53px] flex-col items-center pt-[10px]">
                        <svg width="10" height="12" viewBox="0 0 10 12"><path d="M1.200 0v12M1 7.500h7.500V12M1 4.500h6M8.500 8V6" fill="none" stroke="#66696d" strokeWidth="1.300" /></svg>
                        <span className="mt-[1px] tracking-[-0.4px] whitespace-nowrap">Waiting Room</span>
                    </div>
                    <div className="ml-[10px] flex w-[47px] flex-col items-center border-l border-[#dfe1e5] pt-[9px]">
                        <svg width="12" height="13" viewBox="0 0 12 13"><path d="M6 .5l5.500 6L6 12.500.5 6.500z" fill="#4a4340" /><path d="M6 .5l5.500 6L6 12.500z" fill="#8a6656" /><path d="M6 3.500v4M6 8.800v1.200" stroke="#fff" strokeWidth="1.400" /></svg>
                        <span className="mt-[1px] tracking-[-0.4px]">Critical</span>
                    </div>
                    <div className="flex w-[40px] flex-col items-center pt-[9px]">
                        <svg width="9" height="13" viewBox="0 0 9 13"><path d="M.5 1h8M.5 12h8M1.500 1c0 3 3 4 3 5.500S1.500 9 1.500 12M7.500 1c0 3-3 4-3 5.500s3 2.500 3 5.500" fill="none" stroke="#5d6064" strokeWidth="1.100" /><path d="M3 11.500l1.500-2 1.500 2zM3 3h3L4.500 5z" fill="#5d6064" /></svg>
                        <span className="mt-[1px] tracking-[-0.4px] whitespace-nowrap">No Dispo</span>
                    </div>
                    <div className="ml-[10px] w-[334px] border-l border-[#d5d7dc] pt-[5px] pl-[7px] text-[10px] leading-[15px] whitespace-nowrap">
                        <div className="flex h-[15px] gap-[8px] pt-px"><b className="-mt-px mr-[3px] text-[11.7px] leading-[14px]">My Patients</b><Stat label="Current" value="1" /><Stat label="Last Hour" value="1" /><Stat label="Today" value="1" /></div>
                        <div className="pt-px">Median Door to Doctor: <span className="text-[#e0315c]">62 hrs 52 min</span></div>
                    </div>
                    <div className="border-l border-[#d5d7dc] pt-[5px] pl-[7px] text-[10px] leading-[15px] whitespace-nowrap">
                        <div className="flex h-[15px] gap-[8px] pt-px"><b className="-mt-px mr-px text-[11.5px] leading-[14px]">Department</b><Stat label="WR" value="14" /><Stat label="Prearrivals" value="1" /><Stat label="Current" value="45" /><Stat label="Last Hour" value="0" /><Stat label="Today" value="4" /><span>Median LOS: <span className="text-[#f0792f]">75 hrs 9 min</span></span></div>
                        <div className="pt-px">Median Door to Doctor: <span className="text-[#e0315c]">306 hrs 15 min</span></div>
                    </div>
                </div>

                <div className="ml-[2px] flex h-[22px] w-[1272px] shrink-0 border-b border-[#dfe1e6] bg-[#f3f4f7]">
                    <div className={`${COLS} items-center text-[9.5px] text-[#96999e]`}>
                        <div />
                        <div className="relative flex items-center justify-between pt-[5px] pr-[4px] pl-[6px]">
                            <svg width="6" height="3" viewBox="0 0 6 3" className="absolute -top-[1px] left-[13px]"><path d="M3 0l3 3H0z" fill="#77797d" /></svg>
                            Room <span className="flex items-center gap-[2px]">⋮<Caret /></span>
                        </div>
                        <div />
                        <div className="flex items-center justify-between pt-[5px] pr-[4px] pl-[5px] whitespace-nowrap">Patient Information <span className="flex items-center gap-[2px]">⋮<Caret /></span></div>
                        <div className="pt-[5px] text-center">EP</div>
                        <div className="pt-[5px] text-center">RN</div>
                        <div className="pt-[5px] text-center">Tech</div>
                        <div className="pt-[5px] pl-[5px] tracking-[-0.15px]">Patient Details</div>
                        <div className="relative flex h-[21px] items-center justify-center border-x border-[#dfe1e6]">
                            <div className="-mt-px mr-px scale-90"><HeartIcon /></div>
                            <svg width="3" height="5" viewBox="0 0 3 5" className="absolute top-[12px] right-[4px]"><path d="M0 0l3 2.500L0 5z" fill="#55585c" /></svg>
                        </div>
                        <div className="flex justify-center"><PillIcon color="#8f9296" /></div>
                        <div className="flex justify-center"><div className="scale-90"><TubeIcon color="#95989c" /></div></div>
                        <div className="flex justify-center"><div className="scale-75"><EkgIcon color="#85888c" /></div></div>
                        <div className="flex justify-center pb-px"><RadIcon color="#8f9296" size={12} /></div>
                        <div className="flex justify-center pb-px"><KitIcon color="#97999d" w={12} h={11} /></div>
                        <div className="flex justify-center pr-[2px] pb-px"><PhoneIcon color="#8f9296" size={12} /></div>
                        <div className="flex justify-center pb-px"><svg width="12" height="12" viewBox="0 0 12 12"><path d="M10 6v4.500H1v-8h6" fill="none" stroke="#77797d" strokeWidth="1.300" /><path d="M3 5.500l2.500 2.500L11 1" fill="none" stroke="#77797d" strokeWidth="1.500" /></svg></div>
                        <div className="pt-[5px] pl-[5px] tracking-[-0.2px]">Status</div>
                        <div className="pt-[5px] pl-[5px] tracking-[-0.2px]">LOS</div>
                        <div className="pt-[5px] pl-[5px] tracking-[-0.4px]">Doc</div>
                    </div>
                </div>

                <div className="ml-[2px] flex h-[424px] w-[1272px] shrink-0 overflow-hidden">
                    <div className="-mt-[6.4px] w-[1258px] shrink-0">
                        {rows.map((row, i) => <PatientRow key={i} row={row} index={i} />)}
                        <div className={`${COLS} h-[20px] border-t border-[#e6e7eb]`}>
                            <div className={`mt-px ${ORANGE}`} />
                            <div className="col-span-16" />
                            <div className="pt-[3px] pl-px"><div className="h-[10px] w-[38px] rounded-t-[2px] bg-[#c90008]" /></div>
                            <div />
                        </div>
                    </div>
                    <div className="relative w-[14px] bg-[#f0f0f3]">
                        <svg width="10" height="7" viewBox="0 0 10 7" className="absolute top-[14px] left-[2px]"><path d="M1 6l4-4.500L9 6" fill="none" stroke="#4e5155" strokeWidth="2" /></svg>
                        <div className="absolute top-[238px] left-px h-[126px] w-[12px] bg-[#c7c8cb]" />
                        <svg width="10" height="7" viewBox="0 0 10 7" className="absolute top-[404px] left-[2px]"><path d="M1 1l4 4.500L9 1" fill="none" stroke="#4e5155" strokeWidth="2" /></svg>
                    </div>
                </div>
            </div>

            <div className="flex h-[13px] shrink-0 items-center justify-end gap-[7px] bg-[#ececec] pt-[5px] pr-[3px] text-[9.5px] leading-none tracking-[-0.3px] text-[#2b2d30]">
                <span>B0581</span><span>STU007479</span><span>October 01, 2020</span><span>9:05 EDT</span>
            </div>
            <div className="h-[17px] shrink-0 bg-black" />

            {/* click highlight and pointer */}
            <div className="absolute top-[367px] left-[96px] size-[48px] rounded-full border-2 border-[#e3e63c]" />
            <svg width="14" height="18" viewBox="0 0 14 17" className="absolute top-[389px] left-[116px]">
                <path d="M3 9V2c0-1.800 2.300-1.800 2.300 0v4c1-1 2-.5 2.200.4 1-.6 2-.2 2.200.6 1-.4 2.300 0 2.300 1.500v3.500c0 1-.8 1.700-.8 2.500v1.500H5V14.500L1.200 10.500C.5 9.300 1.800 8.500 3 9z" fill="#fff" stroke="#2b2b2b" />
            </svg>
        </div>
    );
};

export default App;
